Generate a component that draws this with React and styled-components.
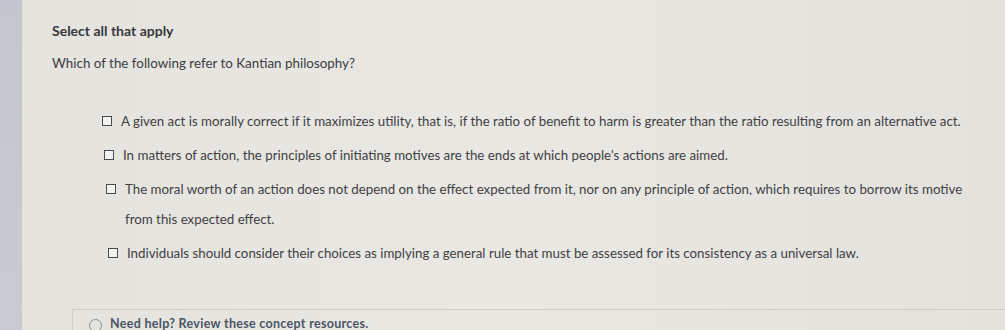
import React from "react";
import styled, { createGlobalStyle } from "styled-components";

const Global = createGlobalStyle`
  html, body { margin: 0; padding: 0; }
  body {
    width: 1005px; height: 330px; overflow: hidden;
    background: #e7e6e1;
    font-family: Lato, "Open Sans", "Liberation Sans", sans-serif;
    color: #404045;
  }
`;

const Page = styled.div`
  display: flex;
  width: 1005px;
  height: 330px;
  overflow: hidden;
  background: linear-gradient(90deg, #e4e3de 0%, #e9e8e3 50%, #e3e2dd 100%);
`;

const Side = styled.div`
  width: 22px;
  flex: none;
  background: linear-gradient(180deg, #c4c6cf 0%, #c9cad2 100%);
`;

const Main = styled.div`
  flex: 1;
  display: flex;
  flex-direction: column;
  padding-left: 30px;
`;

const Title = styled.div`
  margin-top: 22px;
  font-size: 14px;
  font-weight: 700;
  color: #38383c;
  line-height: 18px;
`;

const Question = styled.div`
  margin-top: 14px;
  font-size: 13.4px;
  line-height: 18px;
  color: #3c3c41;
`;

const Options = styled.div`
  margin-top: 34px;
  padding-left: 50px;
  display: flex;
  flex-direction: column;
  gap: 4px;
`;

const Option = styled.label`
  display: flex;
  align-items: flex-start;
  gap: 9px;
  font-size: 13.3px;
  line-height: 30px;
  color: #3f3f44;
  padding-left: ${(p) => p.$shift}px;
`;

const Box = styled.span`
  flex: none;
  width: 8px;
  height: 8px;
  margin-top: 10px;
  border: 1.6px solid #4a4a50;
  background: #f2f1ed;
`;

const Text = styled.span`
  max-width: 840px;
`;

const Rule = styled.div`
  margin-top: 20px;
  margin-left: -30px;
  height: 1px;
  background: #c2c1bb;
`;

const Help = styled.div`
  margin-top: 21px;
  margin-left: 20px;
  border-top: 1px solid #cfcec8;
  border-left: 1px solid #cfcec8;
  display: flex;
  align-items: center;
  gap: 8px;
  padding: 3px 0 0 16px;
  height: 20px;
`;

const Circle = styled.span`
  width: 11px;
  height: 11px;
  border-radius: 50%;
  border: 1.5px solid #8a8c92;
  flex: none;
  margin-top: 6px;
`;

const HelpText = styled.span`
  font-size: 12.5px;
  font-weight: 700;
  color: #4b5566;
  margin-top: 2px;
  line-height: 14px;
  letter-spacing: 0.3px;
`;

const options = [
  "A given act is morally correct if it maximizes utility, that is, if the ratio of benefit to harm is greater than the ratio resulting from an alternative act.",
  "In matters of action, the principles of initiating motives are the ends at which people's actions are aimed.",
  "The moral worth of an action does not depend on the effect expected from it, nor on any principle of action, which requires to borrow its motive from this expected effect.",
  "Individuals should consider their choices as implying a general rule that must be assessed for its consistency as a universal law.",
];

export default function App() {
  return (
    <>
      <Global />
      <Page>
        <Side />
        <Main>
          <Title>Select all that apply</Title>
          <Question>Which of the following refer to Kantian philosophy?</Question>
          <Options>
            {options.map((t, i) => (
              <Option key={i} $shift={i * 2}>
                <Box />
                <Text>{t}</Text>
              </Option>
            ))}
          </Options>
          <Rule />
          <Help>
            <Circle />
            <HelpText>Need help? Review these concept resources.</HelpText>
          </Help>
        </Main>
      </Page>
    </>
  );
}
